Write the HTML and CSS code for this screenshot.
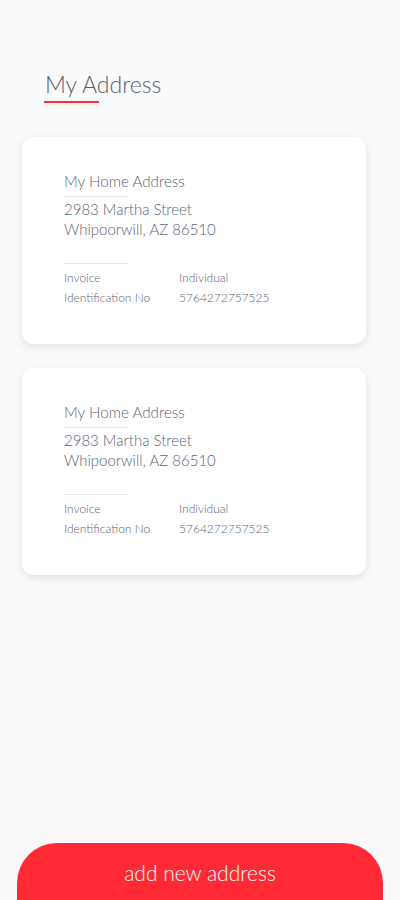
FILE: index.html
```html
<!DOCTYPE html>
<html lang="en">

<head>
  <meta charset="UTF-8">
  <title>My Address</title>
  <link rel="stylesheet" href="styles.css">
</head>

<body>
  <main class="side">
    <h1 class="overskrift">My Address</h1>

    <section class="adresser">
      <article class="kort">
        <p class="navn">My Home Address</p>
        <hr class="streg">
        <p class="adresse">2983 Martha Street<br>Whipoorwill, AZ 86510</p>
        <hr class="streg streg-nederst">
        <div class="info">
          <span>Invoice</span>
          <span>Individual</span>
          <span>Identification No</span>
          <span>5764272757525</span>
        </div>
      </article>

      <article class="kort">
        <p class="navn">My Home Address</p>
        <hr class="streg">
        <p class="adresse">2983 Martha Street<br>Whipoorwill, AZ 86510</p>
        <hr class="streg streg-nederst">
        <div class="info">
          <span>Invoice</span>
          <span>Individual</span>
          <span>Identification No</span>
          <span>5764272757525</span>
        </div>
      </article>
    </section>
  </main>

  <button class="ny">add new address</button>
</body>

</html>
```

FILE: styles.css
```css
* {
  box-sizing: border-box;
}

body {
  margin: 0;
  height: 900px;
  background: #fafafa;
  font-family: "Lato", "Noto Sans", sans-serif;
  font-weight: 300;
  color: #5b6477;
  position: relative;
  overflow: hidden;
}

.side {
  padding: 70px 34px 0 22px;
}

.overskrift {
  display: inline-block;
  margin: 0 0 0 23px;
  font-size: 23px;
  font-weight: 300;
  line-height: 28px;
  position: relative;
  color: #566073;
}

.overskrift::after {
  content: "";
  position: absolute;
  left: -1px;
  bottom: -5px;
  width: 55px;
  height: 2px;
  background: #ff2a35;
}

.adresser {
  margin-top: 39px;
  display: flex;
  flex-direction: column;
  gap: 24px;
}

.kort {
  background: #fff;
  border-radius: 12px;
  box-shadow: 0 3px 8px rgba(0, 0, 0, 0.1);
  height: 207px;
  padding: 34px 42px 0;
}

.navn {
  margin: 0;
  font-size: 15.2px;
  line-height: 20px;
}

.streg {
  width: 65px;
  margin: 5px 0 3px -1px;
  border: 0;
  border-top: 1px solid #e6e9ed;
}

.adresse {
  margin: 0;
  font-size: 15px;
  line-height: 19.5px;
}

.streg-nederst {
  margin-top: 24px;
  margin-bottom: 4px;
}

.info {
  display: grid;
  grid-template-columns: 115px auto;
  font-size: 12px;
  line-height: 19.5px;
}

.ny {
  position: absolute;
  left: 17px;
  right: 17px;
  bottom: -40px;
  height: 97px;
  border: 0;
  border-radius: 40px;
  background: #ff2a35;
  color: #fff;
  font-family: "Lato", "Noto Sans", sans-serif;
  font-weight: 300;
  font-size: 21px;
  padding-bottom: 40px;
}
```
